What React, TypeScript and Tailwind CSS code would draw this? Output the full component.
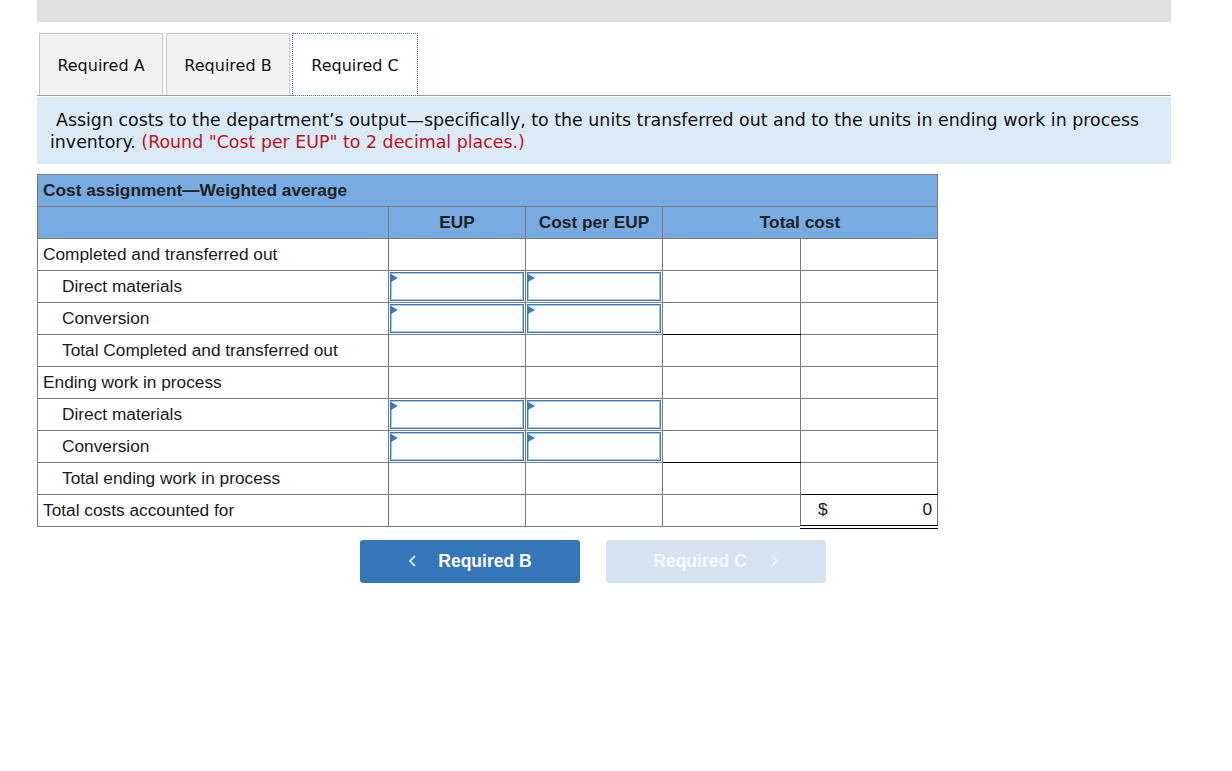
import React from 'react';

const verdana = { fontFamily: '"DejaVu Sans", Verdana, sans-serif' };
const arial = { fontFamily: '"Liberation Sans", Arial, sans-serif' };

type Row = {
  label: string;
  indent?: boolean;
  inputs?: boolean;
  blackBottom4?: boolean;
  blackBottom5?: boolean;
  final?: boolean;
};

const rows: Row[] = [
  { label: 'Completed and transferred out' },
  { label: 'Direct materials', indent: true, inputs: true },
  { label: 'Conversion', indent: true, inputs: true, blackBottom4: true },
  { label: 'Total Completed and transferred out', indent: true },
  { label: 'Ending work in process' },
  { label: 'Direct materials', indent: true, inputs: true },
  { label: 'Conversion', indent: true, inputs: true, blackBottom4: true },
  { label: 'Total ending work in process', indent: true, blackBottom5: true },
  { label: 'Total costs accounted for', final: true },
];

function EntryBox() {
  return (
    <div className="relative h-[29px] border border-[#3b78bd] shadow-[inset_0_0_0_1px_#a9c6e8] bg-white">
      <span className="absolute left-0 top-[1px] w-0 h-0 border-y-[4px] border-y-transparent border-l-[7px] border-l-[#3b78bd]" />
    </div>
  );
}

function Tab({ label, active }: { label: string; active?: boolean }) {
  if (active) {
    return (
      <div className="h-[63px] w-[126px] -mb-px pt-[2px] bg-white border-[1.5px] border-dotted border-[#2a6fcf] flex items-center justify-center text-[16px] text-[#111]">
        {label}
      </div>
    );
  }
  return (
    <div className="h-[62px] w-[124px] pt-[2px] bg-[#f2f2f2] border border-[#c9c9c9] border-b-0 flex items-center justify-center text-[16px] text-[#111]">
      {label}
    </div>
  );
}

const cell = 'border border-[#7a7a7a]';

export default function App() {
  return (
    <div className="w-[1232px] h-[771px] bg-white pl-[37px]">
      <div className="w-[1134px]">
        <div className="h-[22px] bg-[#e0e0e0]" />

        <div className="mt-[11px] flex items-end border-b border-[#9a9a9a] pl-[2px]" style={verdana}>
          <Tab label="Required A" />
          <div className="w-[3px]" />
          <Tab label="Required B" />
          <div className="w-[2px]" />
          <Tab label="Required C" active />
        </div>

        <div
          className="mt-[1px] h-[67px] bg-[#dbeaf7] pl-[13px] pr-[10px] pt-[12px] text-[17.4px] leading-[22px] text-[#111] indent-[6px]"
          style={verdana}
        >
          Assign costs to the department’s output—specifically, to the units transferred out and to the units in ending work in process inventory.{' '}
          <span className="text-[#c1121c]">(Round "Cost per EUP" to 2 decimal places.)</span>
        </div>

        <table className="mt-[10px] border-collapse table-fixed w-[900px] text-[17.3px] text-[#1a1a1a]" style={arial}>
          <colgroup>
            <col className="w-[351px]" />
            <col className="w-[137px]" />
            <col className="w-[137px]" />
            <col className="w-[138px]" />
            <col className="w-[137px]" />
          </colgroup>
          <tbody>
            <tr className="h-[32px] bg-[#77abe1]">
              <td colSpan={5} className={`${cell} px-[5px] font-bold text-[#222]`}>
                Cost assignment—Weighted average
              </td>
            </tr>
            <tr className="h-[32px] bg-[#77abe1] font-bold text-[#222]">
              <td className={cell} />
              <td className={`${cell} text-center`}>EUP</td>
              <td className={`${cell} text-center`}>Cost per EUP</td>
              <td colSpan={2} className={`${cell} text-center`}>Total cost</td>
            </tr>
            {rows.map((r, i) => (
              <tr key={i} className="h-[32px]">
                <td className={`${cell} ${r.indent ? 'pl-[24px]' : 'pl-[5px]'} py-0`}>{r.label}</td>
                <td className={`${cell} p-[1px]`}>{r.inputs ? <EntryBox /> : null}</td>
                <td className={`${cell} p-[1px]`}>{r.inputs ? <EntryBox /> : null}</td>
                <td className={`${cell} ${r.blackBottom4 ? 'border-b-black' : ''}`} />
                <td
                  className={`${cell} ${r.blackBottom5 ? 'border-b-black' : ''} ${
                    r.final ? 'border-t-black border-b-[4px] border-b-black [border-bottom-style:double]' : ''
                  }`}
                >
                  {r.final ? (
                    <div className="flex justify-between pl-[17px] pr-[5px]">
                      <span>$</span>
                      <span>0</span>
                    </div>
                  ) : null}
                </td>
              </tr>
            ))}
          </tbody>
        </table>

        <div className="mt-[11px] ml-[323px] flex gap-[26px]" style={arial}>
          <button className="w-[220px] h-[43px] rounded-[3px] bg-[#3575b9] text-white font-bold text-[17.5px] flex items-center justify-center gap-[20px]">
            <svg width="10" height="16" viewBox="0 0 10 16" fill="none">
              <polyline points="7,3 2,8 7,13" stroke="white" strokeWidth="1.6" />
            </svg>
            <span>Required B</span>
          </button>
          <button className="w-[220px] h-[43px] rounded-[3px] bg-[#d6e4f2] text-[#f4f8fc] font-bold text-[17.5px] flex items-center justify-center gap-[22px]">
            <span>Required C</span>
            <svg width="10" height="16" viewBox="0 0 10 16" fill="none">
              <polyline points="3,3 8,8 3,13" stroke="#f4f8fc" strokeWidth="1.6" />
            </svg>
          </button>
        </div>
      </div>
    </div>
  );
}
